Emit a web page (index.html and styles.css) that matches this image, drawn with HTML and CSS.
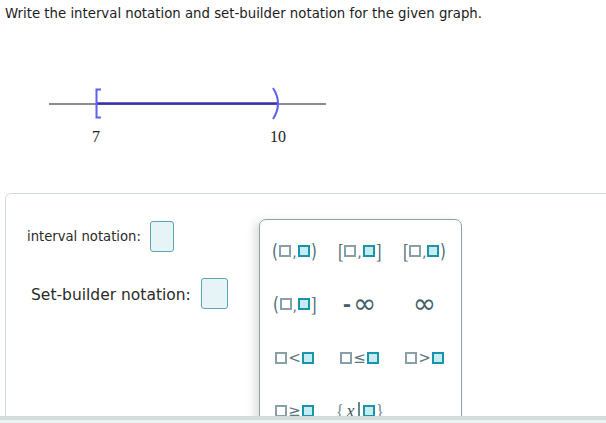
FILE: index.html
```html
<!DOCTYPE html>
<html>
<head>
<meta charset="utf-8">
<link rel="stylesheet" href="styles.css">
</head>
<body>
<div class="page">
  <div class="content">
    <p class="prompt">Write the interval notation and set-builder notation for the given graph.</p>
    <svg class="graph" width="340" height="70" viewBox="0 0 340 70">
      <line x1="49" y1="34" x2="326" y2="34" stroke="#666" stroke-width="1.6"/>
      <line x1="96" y1="33.5" x2="277" y2="33.5" stroke="#3434a8" stroke-width="2.6"/>
      <path d="M101 19.5 H96.5 V47.5 H101" fill="none" stroke="#5f5ff2" stroke-width="2"/>
      <path d="M273 18 Q283 33.5 273 49" fill="none" stroke="#5f5ff2" stroke-width="2"/>
      <text x="96" y="72" text-anchor="middle" class="tick">7</text>
      <text x="278" y="72" text-anchor="middle" class="tick">10</text>
    </svg>
    <div class="card">
      <div class="answers">
        <div class="row">
          <span class="label">interval notation:</span>
          <span class="answer-box"></span>
        </div>
        <div class="row row-set">
          <span class="label label-lg">Set-builder notation:</span>
          <span class="answer-box"></span>
        </div>
      </div>
      <div class="palette">
        <div class="item"><span class="p">(</span><span class="b g"></span><span class="c">,</span><span class="b t"></span><span class="p">)</span></div>
        <div class="item"><span class="p br">[</span><span class="b g"></span><span class="c">,</span><span class="b t"></span><span class="p br">]</span></div>
        <div class="item"><span class="p br">[</span><span class="b g"></span><span class="c">,</span><span class="b t"></span><span class="p">)</span></div>
        <div class="item"><span class="p">(</span><span class="b g"></span><span class="c">,</span><span class="b t"></span><span class="p br">]</span></div>
        <div class="item"><span class="minus">-</span><span class="inf">∞</span></div>
        <div class="item"><span class="inf">∞</span></div>
        <div class="item"><span class="b g"></span><span class="op">&lt;</span><span class="b t"></span></div>
        <div class="item"><span class="b g"></span><span class="op">≤</span><span class="b t"></span></div>
        <div class="item"><span class="b g"></span><span class="op">&gt;</span><span class="b t"></span></div>
        <div class="item"><span class="b g"></span><span class="op">≥</span><span class="b t"></span></div>
        <div class="item"><span class="brace">{</span><span class="x">x</span><span class="bar"></span><span class="b t"></span><span class="brace">}</span></div>
      </div>
    </div>
  </div>
  <div class="hbar"></div>
  <div class="htrack"></div>
</div>
</body>
</html>
```
FILE: styles.css
```css
html, body {
  margin: 0;
  padding: 0;
  background: #fff;
}
.page {
  width: 606px;
  height: 423px;
  display: flex;
  flex-direction: column;
  overflow: hidden;
}
.content {
  flex: 1;
  overflow: hidden;
  min-height: 0;
}
.prompt {
  margin: 0;
  padding: 5px 0 0 5px;
  font-family: "DejaVu Sans", Verdana, sans-serif;
  font-size: 13.3px;
  line-height: 17px;
  color: #1c1c1c;
}
.graph {
  display: block;
  margin-top: 48px;
  overflow: visible;
}
.tick {
  font-family: "Liberation Serif", serif;
  font-size: 16px;
  fill: #222;
}
.card {
  margin: 53px 0 0 5px;
  width: 640px;
  height: 260px;
  border: 1px solid #d3dada;
  border-radius: 6px;
  display: flex;
  box-sizing: border-box;
}
.answers {
  width: 253px;
  padding: 27px 0 0 21px;
  box-sizing: border-box;
  display: flex;
  flex-direction: column;
  gap: 26px;
}
.row {
  display: flex;
  align-items: center;
  gap: 9px;
}
.row-set {
  padding-left: 4px;
  gap: 10px;
}
.label {
  font-family: "DejaVu Sans", Verdana, sans-serif;
  font-size: 13.2px;
  color: #2a2a2a;
}
.label-lg {
  font-size: 15.5px;
  margin-top: 3px;
}
.answer-box {
  width: 24px;
  height: 31px;
  box-sizing: border-box;
  border: 1px solid #5aa5b4;
  border-radius: 3px;
  background: #e6f4f7;
}
.row-set .answer-box {
  width: 27px;
}
.palette {
  margin-top: 25px;
  width: 203px;
  height: 260px;
  box-sizing: border-box;
  border: 1px solid #8ba3ab;
  border-radius: 7px;
  box-shadow: -5px 2px 8px rgba(0, 0, 0, 0.12);
  padding: 4px 0 0 2px;
  display: grid;
  grid-template-columns: repeat(3, 65px);
  grid-auto-rows: 53.5px;
}
.item {
  display: flex;
  align-items: center;
  justify-content: center;
  color: #4b6b74;
}
.p {
  font-family: "DejaVu Sans", sans-serif;
  font-size: 20px;
  line-height: 20px;
  color: #4b6b74;
  transform: scaleX(0.75);
}
.p.br {
  font-family: "Liberation Serif", serif;
  font-size: 22px;
}
.b {
  display: inline-block;
  width: 12px;
  height: 12px;
  box-sizing: border-box;
  border: 2px solid;
}
.b.g {
  border-color: #8aa0a8;
  background: #fff;
}
.b.t {
  border-color: #1796ab;
  background: #c8ebf1;
}
.c {
  font-family: "DejaVu Sans", sans-serif;
  font-size: 14px;
  color: #5a7a82;
  margin: 3px 1px 0 1px;
  align-self: center;
}
.op {
  font-family: "DejaVu Sans", sans-serif;
  font-size: 15px;
  color: #5a7a82;
  margin: 0 1px;
}
.minus {
  font-family: "DejaVu Sans", sans-serif;
  font-size: 20px;
  font-weight: bold;
  color: #3f5f68;
  margin-right: 2px;
}
.inf {
  font-family: "DejaVu Sans", sans-serif;
  font-size: 28px;
  line-height: 20px;
  color: #3f5f68;
}
.brace {
  font-family: "Liberation Serif", serif;
  font-size: 20px;
  color: #6a858c;
  transform: scaleX(0.8);
}
.x {
  font-family: "Liberation Serif", serif;
  font-style: italic;
  font-size: 18px;
  color: #3f5f68;
  margin: 0 3px 0 2px;
}
.bar {
  display: inline-block;
  width: 2px;
  height: 18px;
  background: #6a858c;
  margin-right: 3px;
}
.hbar {
  height: 4px;
  background: #d3dbdb;
  flex: none;
}
.htrack {
  height: 3px;
  background: #eef1f1;
  flex: none;
}
```
